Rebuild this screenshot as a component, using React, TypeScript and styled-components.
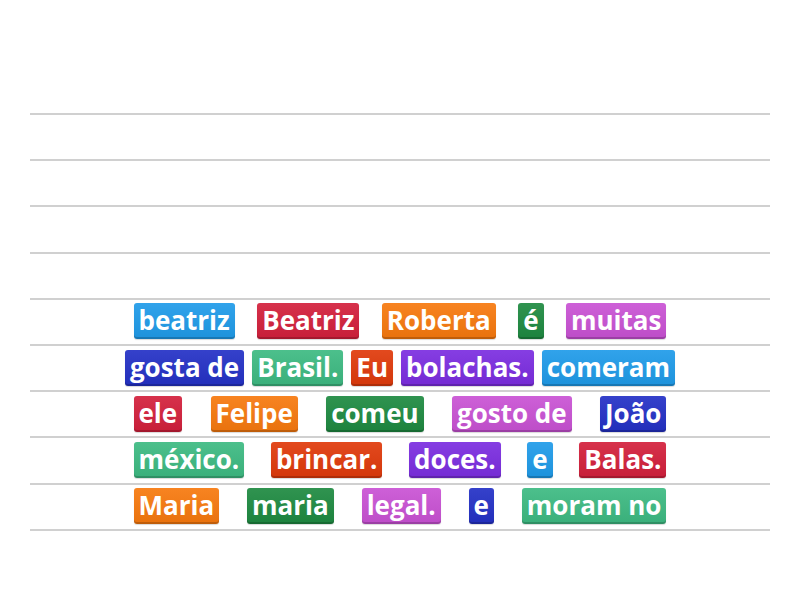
import React from 'react';
import styled, { createGlobalStyle } from 'styled-components';

const GlobalStyle = createGlobalStyle`
  html, body {
    margin: 0;
    padding: 0;
    background: #ffffff;
  }
  body {
    font-family: 'Open Sans', 'Liberation Sans', sans-serif;
  }
`;

const COLORS = {
  blue: '#1f9be9',
  red: '#d3203c',
  orange: '#f7790e',
  green: '#1e8a41',
  pink: '#c952d4',
  navy: '#2431c6',
  teal: '#3dba82',
  rust: '#e03a0b',
  purple: '#7b2de0',
};

type Tone = keyof typeof COLORS;

const Page = styled.div`
  width: 800px;
  height: 600px;
  padding-top: 113px;
  box-sizing: border-box;
`;

const Lines = styled.div`
  margin: 0 30px;
  border-bottom: 2px solid #d0d0d0;
`;

const Row = styled.div`
  height: 46.2px;
  box-sizing: border-box;
  border-top: 2px solid #d0d0d0;
  display: flex;
  align-items: center;
  justify-content: center;
`;

const Words = styled.div`
  display: flex;
  align-items: center;
  justify-content: space-between;
  gap: 8px;
  min-width: 533px;
  width: fit-content;
`;

const Tile = styled.span<{ $tone: Tone }>`
  display: inline-block;
  height: 36px;
  line-height: 35px;
  padding: 0 5px;
  border-radius: 3px;
  background: ${(p) => COLORS[p.$tone]};
  background-image: linear-gradient(rgba(255, 255, 255, 0.08), rgba(0, 0, 0, 0.06));
  box-shadow: inset 0 -2px 0 rgba(0, 0, 0, 0.18), 0 1px 1px rgba(0, 0, 0, 0.15);
  color: #ffffff;
  font-size: 26px;
  font-weight: 700;
  white-space: nowrap;
  margin-top: -1px;
`;

const rows: [string, Tone][][] = [
  [],
  [],
  [],
  [],
  [
    ['beatriz', 'blue'],
    ['Beatriz', 'red'],
    ['Roberta', 'orange'],
    ['é', 'green'],
    ['muitas', 'pink'],
  ],
  [
    ['gosta de', 'navy'],
    ['Brasil.', 'teal'],
    ['Eu', 'rust'],
    ['bolachas.', 'purple'],
    ['comeram', 'blue'],
  ],
  [
    ['ele', 'red'],
    ['Felipe', 'orange'],
    ['comeu', 'green'],
    ['gosto de', 'pink'],
    ['João', 'navy'],
  ],
  [
    ['méxico.', 'teal'],
    ['brincar.', 'rust'],
    ['doces.', 'purple'],
    ['e', 'blue'],
    ['Balas.', 'red'],
  ],
  [
    ['Maria', 'orange'],
    ['maria', 'green'],
    ['legal.', 'pink'],
    ['e', 'navy'],
    ['moram no', 'teal'],
  ],
];

export default function App() {
  return (
    <Page>
      <GlobalStyle />
      <Lines>
        {rows.map((words, i) => (
          <Row key={i}>
            {words.length > 0 && (
              <Words>
                {words.map(([text, tone]) => (
                  <Tile key={text + tone} $tone={tone}>
                    {text}
                  </Tile>
                ))}
              </Words>
            )}
          </Row>
        ))}
      </Lines>
    </Page>
  );
}
